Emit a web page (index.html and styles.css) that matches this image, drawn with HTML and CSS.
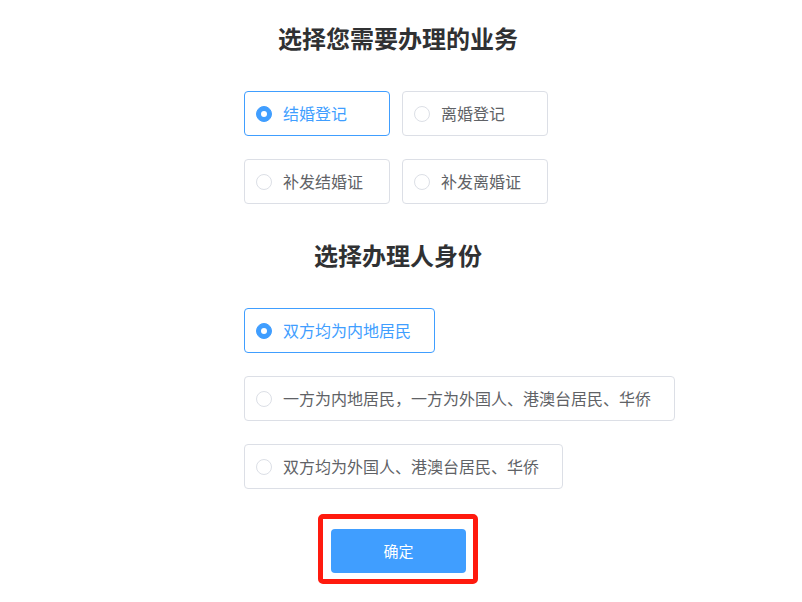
FILE: index.html
```html
<!DOCTYPE html>
<html lang="zh-CN">
<head>
<meta charset="utf-8">
<title>选择业务</title>
<link rel="stylesheet" href="styles.css">
</head>
<body>
<main class="page">
  <h2 class="title title-first">选择您需要办理的业务</h2>
  <div class="list">
    <div class="grid">
      <label class="opt opt-fixed is-checked"><span class="dot"></span><span class="txt">结婚登记</span></label>
      <label class="opt opt-fixed"><span class="dot"></span><span class="txt">离婚登记</span></label>
      <label class="opt opt-fixed"><span class="dot"></span><span class="txt">补发结婚证</span></label>
      <label class="opt opt-fixed"><span class="dot"></span><span class="txt">补发离婚证</span></label>
    </div>
  </div>
  <h2 class="title title-second">选择办理人身份</h2>
  <div class="list">
    <div class="stack">
      <label class="opt is-checked"><span class="dot"></span><span class="txt">双方均为内地居民</span></label>
      <label class="opt"><span class="dot"></span><span class="txt">一方为内地居民，一方为外国人、港澳台居民、华侨</span></label>
      <label class="opt"><span class="dot"></span><span class="txt">双方均为外国人、港澳台居民、华侨</span></label>
    </div>
  </div>
  <div class="mark">
    <button class="btn" type="button">确定</button>
  </div>
</main>
</body>
</html>
```

FILE: styles.css
```css
* { box-sizing: border-box; }
html, body { margin: 0; padding: 0; background: #fff; }
body {
  padding-right: 6px;
  font-family: "Noto Sans CJK SC", "Noto Sans", sans-serif;
  color: #606266;
}
.page {
  display: flex;
  flex-direction: column;
  align-items: center;
  padding-top: 22px;
}
.title {
  margin: 0;
  font-size: 24px;
  line-height: 32px;
  font-weight: 700;
  color: #303133;
}
.title-second { margin-top: 35px; }
.list {
  width: 308px;
  margin-top: 37px;
}
.grid {
  display: grid;
  grid-template-columns: 146px 146px;
  column-gap: 12px;
  row-gap: 23px;
}
.stack {
  display: flex;
  flex-direction: column;
  align-items: flex-start;
  gap: 23px;
}
.stack .opt { width: max-content; }
.opt {
  display: flex;
  align-items: center;
  height: 45px;
  padding: 0 23px 0 11px;
  border: 1px solid #dcdfe6;
  border-radius: 4px;
  font-size: 16px;
  color: #606266;
  white-space: nowrap;
  cursor: pointer;
}
.dot {
  width: 16px;
  height: 16px;
  border: 1px solid #dcdfe6;
  border-radius: 50%;
  background: #fff;
  margin-right: 11px;
  flex: none;
  position: relative;
}
.txt { line-height: 20px; padding-bottom: 2px; }
.is-checked { border-color: #409eff; color: #409eff; }
.is-checked .dot { background: #409eff; border-color: #409eff; }
.is-checked .dot::after {
  content: "";
  position: absolute;
  left: 50%; top: 50%;
  width: 6px; height: 6px;
  margin: -3px 0 0 -3px;
  border-radius: 50%;
  background: #fff;
}
.mark {
  margin-top: 25px;
  border: 5px solid #ff1a0e;
  border-radius: 5px;
  padding: 10px 7px 6px 8px;
}
.btn {
  display: block;
  width: 135px;
  height: 44px;
  border: 0;
  border-radius: 4px;
  background: #409eff;
  color: #fff;
  font-family: "Noto Sans CJK SC", sans-serif;
  font-size: 15px;
  padding-bottom: 2px;
}
```
